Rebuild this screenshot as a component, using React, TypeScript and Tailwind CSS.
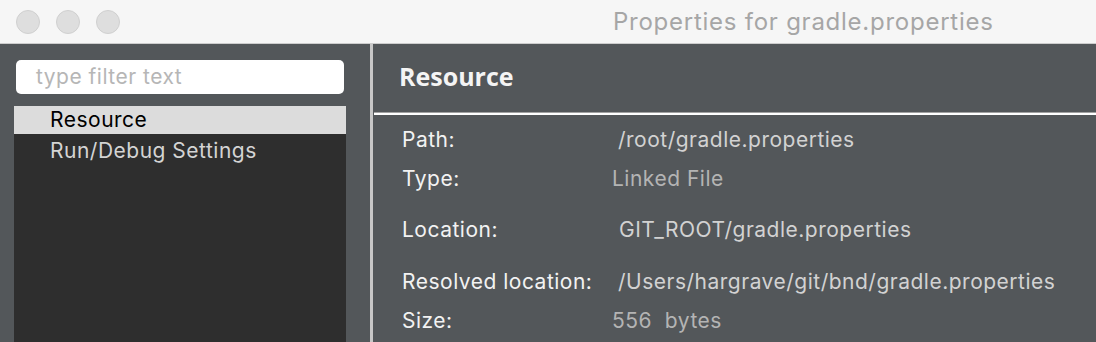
const sans = "font-['Inter','Noto_Sans',sans-serif]";

const rows = [
  { label: "Path:", value: "/root/gradle.properties", mt: "mt-[11px]", pl: "pl-[6px]", tone: "text-[#d2d2d2]" },
  { label: "Type:", value: "Linked File", mt: "mt-[11px]", pl: "pl-0", tone: "text-[#b4b4b4]" },
  { label: "Location:", value: "GIT_ROOT/gradle.properties", mt: "mt-[23px]", pl: "pl-[7px]", tone: "text-[#d2d2d2]" },
  { label: "Resolved location:", value: "/Users/hargrave/git/bnd/gradle.properties", mt: "mt-[24px]", pl: "pl-[6px]", tone: "text-[#d2d2d2]" },
  { label: "Size:", value: "556  bytes", mt: "mt-[11px]", pl: "pl-0", tone: "text-[#b4b4b4]" },
];

const TitleBar = () => (
  <div className="h-[44px] bg-[#f6f6f6] border-b border-[#cdcdcd] flex items-center">
    <div className="flex gap-4 pl-4">
      <span className="w-6 h-6 rounded-full bg-[#dedede] border border-[#d0d0d0]" />
      <span className="w-6 h-6 rounded-full bg-[#dedede] border border-[#d0d0d0]" />
      <span className="w-6 h-6 rounded-full bg-[#dedede] border border-[#d0d0d0]" />
    </div>
    <span className={`ml-[493px] text-[24px] tracking-[0.75px] text-[#a6a6a6] ${sans}`}>
      Properties for gradle.properties
    </span>
  </div>
);

const Sidebar = () => (
  <div className="w-[370px] bg-[#53575a] pt-4 flex flex-col">
    <div className="ml-4 w-[328px] h-[34px] bg-white rounded-[5px] flex items-center pl-5">
      <span className={`text-[21px] tracking-[0.5px] text-[#b6b6b6] ${sans}`}>type filter text</span>
    </div>
    <div className={`ml-[14px] w-[332px] mt-3 flex-1 bg-[#2e2e2e] text-[21px] tracking-[0.5px] ${sans}`}>
      <div className="h-[28px] mb-[2px] bg-[#dcdcdc] text-black flex items-center pl-9">
        Resource
      </div>
      <div className="h-[30px] text-[#d4d4d4] flex items-center pl-9">Run/Debug Settings</div>
    </div>
  </div>
);

export default function App() {
  return (
    <div className="w-[1096px] h-[342px] overflow-hidden flex flex-col bg-[#53575a]">
      <TitleBar />
      <div className="flex flex-1">
        <Sidebar />
        <div className="w-[3px] bg-[#c7c7c7]" />
        <div className="w-px" />
        <div className="flex-1 flex flex-col">
          <div className="h-[68px] flex items-center pl-[25px] pb-[2px]">
            <span className="font-['Open_Sans',sans-serif] font-bold text-[25px] text-[#f4f4f4]">
              Resource
            </span>
          </div>
          <div className="h-px bg-[#a2a2a2]" />
          <div className="h-[2px] bg-white" />
          <div className={`pl-[28px] text-[21px] tracking-[0.5px] ${sans}`}>
            {rows.map((r) => (
              <div key={r.label} className={`flex h-[28px] items-center ${r.mt}`}>
                <span className="w-[210px] text-[#f2f2f2]">{r.label}</span>
                <span className={`${r.pl} ${r.tone} whitespace-pre`}>{r.value}</span>
              </div>
            ))}
          </div>
        </div>
      </div>
    </div>
  );
}
